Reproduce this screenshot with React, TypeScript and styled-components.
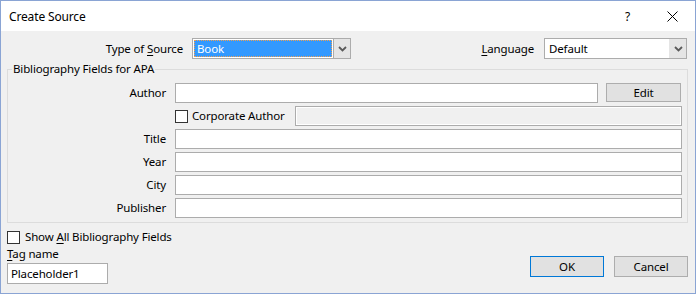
import React from 'react';
import styled, { createGlobalStyle } from 'styled-components';

const Global = createGlobalStyle`
  html, body { margin: 0; padding: 0; background: #ffffff; }
  body {
    font-family: "Noto Sans", "Open Sans", sans-serif;
    font-size: 11.5px;
    letter-spacing: -0.15px;
    color: #000000;
  }
  * { box-sizing: border-box; }
`;

const Window = styled.div`
  width: 696px;
  height: 294px;
  border: 1px solid #8aa4d4;
  background: #f0f0f0;
  display: flex;
  flex-direction: column;
`;

const TitleBar = styled.div`
  height: 30px;
  background: #ffffff;
  display: flex;
  align-items: center;
  padding-left: 8px;
  flex: none;
`;

const TitleText = styled.div`
  font-size: 12px;
  flex: 1;
`;

const TitleButton = styled.div`
  width: 45px;
  height: 30px;
  display: flex;
  align-items: center;
  justify-content: center;
  font-size: 12px;
`;

const Body = styled.div`
  flex: 1;
  display: flex;
  flex-direction: column;
  padding: 7px 7px 0 6px;
`;

const TopRow = styled.div`
  display: grid;
  grid-template-columns: 185px 159px 1fr 143px 1px;
  height: 21px;
  align-items: center;
`;

const RightLabel = styled.div<{ $pad: number }>`
  text-align: right;
  padding-right: ${p => p.$pad}px;
  white-space: nowrap;
  line-height: 16px;
`;

const Key = styled.span`
  text-decoration: underline;
  text-underline-offset: 2px;
`;

const Select = styled.div`
  height: 21px;
  display: flex;
  border: 1px solid #acacac;
  background: #ffffff;
`;

const SelectValue = styled.div<{ $focused?: boolean }>`
  flex: 1;
  margin: ${p => (p.$focused ? '1px' : '0')};
  padding-left: ${p => (p.$focused ? '2px' : '4px')};
  display: flex;
  align-items: center;
  background: ${p => (p.$focused ? '#3399ff' : 'transparent')};
  color: ${p => (p.$focused ? '#ffffff' : '#000000')};
  border: ${p => (p.$focused ? '1px dotted #f0a050' : 'none')};
  white-space: nowrap;
`;

const SelectArrow = styled.div<{ $focused?: boolean }>`
  width: 17px;
  background: #e5e5e5;
  border-left: 1px solid ${p => (p.$focused ? '#acacac' : '#e5e5e5')};
  display: flex;
  align-items: center;
  justify-content: center;
`;

const Group = styled.fieldset`
  margin: 2px 0 0 0;
  padding: 0 5px 4px 0;
  border: 1px solid #dcdcdc;
  min-width: 0;
`;

const Legend = styled.legend`
  margin-left: 4px;
  padding: 0 1px;
  line-height: 16px;
`;

const FieldGrid = styled.div`
  margin-top: 6px;
  display: grid;
  grid-template-columns: 158px 1fr;
  column-gap: 9px;
  row-gap: 3px;
  grid-auto-rows: 20px;
  align-items: center;
`;

const FieldLabel = styled.div`
  text-align: right;
  line-height: 16px;
  white-space: nowrap;
`;

const TextBox = styled.div<{ $disabled?: boolean }>`
  height: 20px;
  border: 1px solid #acacac;
  background: ${p => (p.$disabled ? '#f0f0f0' : '#ffffff')};
  box-shadow: ${p => (p.$disabled ? 'inset 0 0 0 1px #ffffff' : 'none')};
  flex: 1;
  min-width: 0;
`;

const InlineRow = styled.div`
  display: flex;
  align-items: center;
  height: 20px;
  gap: 8px;
`;

const Button = styled.div<{ $default?: boolean; $w: number }>`
  width: ${p => p.$w}px;
  height: ${p => (p.$default !== undefined ? 21 : 19)}px;
  flex: none;
  align-self: flex-start;
  border: 1px solid ${p => (p.$default ? '#0078d7' : '#adadad')};
  background: #e1e1e1;
  display: flex;
  align-items: center;
  justify-content: center;
  line-height: 16px;
`;

const EditButton = styled(Button)`
  margin-right: 1px;
`;

const CheckBox = styled.div`
  width: 13px;
  height: 13px;
  border: 1px solid #333333;
  background: #ffffff;
  flex: none;
`;

const CorpLabel = styled.div`
  width: 107px;
  padding-left: 4px;
  white-space: nowrap;
  flex: none;
  line-height: 16px;
`;

const CorpRow = styled.div`
  display: flex;
  align-items: center;
  height: 20px;
`;

const Bottom = styled.div`
  display: flex;
  justify-content: space-between;
  align-items: flex-end;
`;

const BottomLeft = styled.div`
  display: flex;
  flex-direction: column;
`;

const CheckRow = styled.div`
  margin-top: 6px;
  height: 16px;
  display: flex;
  align-items: center;
  gap: 5px;
  line-height: 16px;
`;

const TagLabel = styled.div`
  margin-top: 1px;
  line-height: 16px;
  height: 16px;
`;

const TagInput = styled.div`
  margin-top: 1px;
  width: 101px;
  height: 21px;
  border: 1px solid #acacac;
  background: #ffffff;
  display: flex;
  align-items: center;
  padding-left: 3px;
`;

const Buttons = styled.div`
  display: flex;
  gap: 10px;
  margin-bottom: 7px;
`;

const Chevron = () => (
  <svg width="9" height="6" viewBox="0 0 9 6">
    <polyline points="1,1 4.5,4.5 8,1" fill="none" stroke="#5a5a5a" strokeWidth="1.8" />
  </svg>
);

const CloseIcon = () => (
  <svg width="11" height="11" viewBox="0 0 11 11">
    <line x1="0.5" y1="0.5" x2="10.5" y2="10.5" stroke="#000" strokeWidth="1" />
    <line x1="10.5" y1="0.5" x2="0.5" y2="10.5" stroke="#000" strokeWidth="1" />
  </svg>
);

const fields = ['Title', 'Year', 'City', 'Publisher'];

export default function App() {
  return (
    <>
      <Global />
      <Window>
        <TitleBar>
          <TitleText>Create Source</TitleText>
          <TitleButton>?</TitleButton>
          <TitleButton>
            <CloseIcon />
          </TitleButton>
        </TitleBar>
        <Body>
          <TopRow>
            <RightLabel $pad={9}>
              Type of <Key>S</Key>ource
            </RightLabel>
            <Select>
              <SelectValue $focused>Book</SelectValue>
              <SelectArrow $focused>
                <Chevron />
              </SelectArrow>
            </Select>
            <RightLabel $pad={10}>
              <Key>L</Key>anguage
            </RightLabel>
            <Select>
              <SelectValue>Default</SelectValue>
              <SelectArrow>
                <Chevron />
              </SelectArrow>
            </Select>
            <div />
          </TopRow>
          <Group>
            <Legend>Bibliography Fields for APA</Legend>
            <FieldGrid>
              <FieldLabel>Author</FieldLabel>
              <InlineRow>
                <TextBox />
                <EditButton $w={75}>Edit</EditButton>
              </InlineRow>
              <div />
              <CorpRow>
                <CheckBox />
                <CorpLabel>Corporate Author</CorpLabel>
                <TextBox $disabled />
              </CorpRow>
              {fields.map(f => (
                <React.Fragment key={f}>
                  <FieldLabel>{f}</FieldLabel>
                  <TextBox />
                </React.Fragment>
              ))}
            </FieldGrid>
          </Group>
          <Bottom>
            <BottomLeft>
              <CheckRow>
                <CheckBox />
                <span>
                  Show <Key>A</Key>ll Bibliography Fields
                </span>
              </CheckRow>
              <TagLabel>
                <Key>T</Key>ag name
              </TagLabel>
              <TagInput>Placeholder1</TagInput>
            </BottomLeft>
            <Buttons>
              <Button $default $w={74}>OK</Button>
              <Button $default={false} $w={74}>Cancel</Button>
            </Buttons>
          </Bottom>
        </Body>
      </Window>
    </>
  );
}
